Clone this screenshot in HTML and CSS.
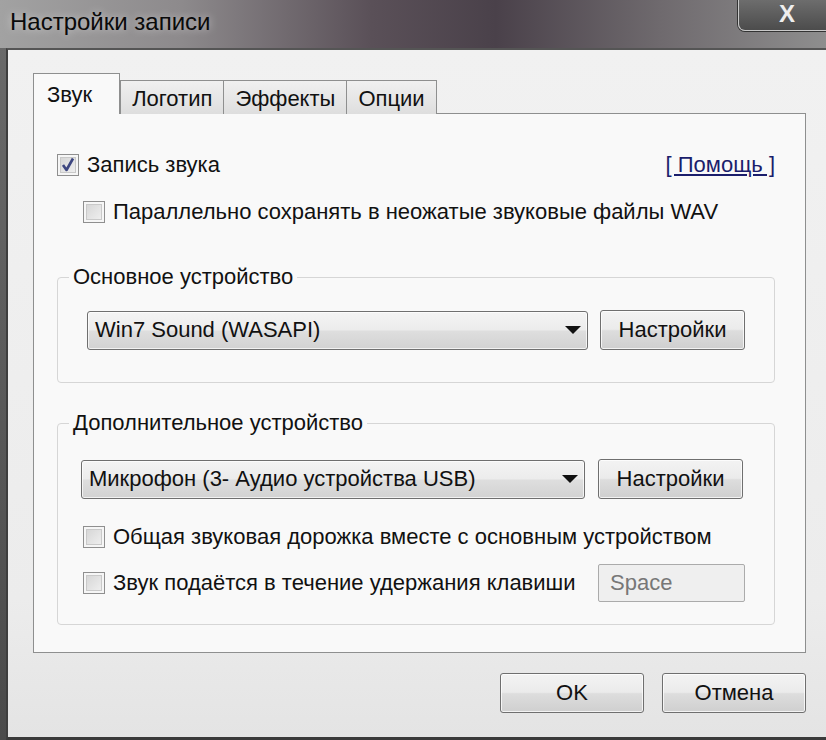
FILE: index.html
```html
<!DOCTYPE html>
<html lang="ru">
<head>
  <meta charset="UTF-8">
  <title>Настройки записи</title>
  <link rel="stylesheet" href="styles.css">
</head>
<body>
  <div class="window">
    <div class="titlebar">
      <span class="title">Настройки записи</span>
      <span class="close">X</span>
    </div>

    <div class="client">
      <div class="tabs">
        <span class="tab active">Звук</span>
        <span class="tab">Логотип</span>
        <span class="tab">Эффекты</span>
        <span class="tab">Опции</span>
      </div>

      <div class="panel">
        <div class="top-row">
          <label class="check">
            <span class="box">
              <svg width="20" height="20" viewBox="0 0 20 20"><path d="M5 10 L8.5 15 L15 3.5" fill="none" stroke="#3d4680" stroke-width="2.6" stroke-linejoin="round"/></svg>
            </span>
            Запись звука
          </label>
          <a class="help" href="#">[ Помощь ]</a>
        </div>
        <label class="check sub"><span class="box"></span>Параллельно сохранять в неожатые звуковые файлы WAV</label>

        <fieldset class="group main-dev">
          <legend>Основное устройство</legend>
          <div class="device-row">
            <div class="combo"><span>Win7 Sound (WASAPI)</span><span class="arrow"></span></div>
            <button class="btn">Настройки</button>
          </div>
        </fieldset>

        <fieldset class="group extra-dev">
          <legend>Дополнительное устройство</legend>
          <div class="device-row">
            <div class="combo"><span>Микрофон (3- Аудио устройства USB)</span><span class="arrow"></span></div>
            <button class="btn">Настройки</button>
          </div>
          <label class="check opt"><span class="box"></span>Общая звуковая дорожка вместе с основным устройством</label>
          <div class="key-row">
            <label class="check"><span class="box"></span>Звук подаётся в течение удержания клавиши</label>
            <span class="keybox">Space</span>
          </div>
        </fieldset>
      </div>

      <div class="footer">
        <button class="btn big">OK</button>
        <button class="btn big">Отмена</button>
      </div>
    </div>
  </div>
</body>
</html>
```

FILE: styles.css
```css
body {
  margin: 0;
  font-family: "Liberation Sans", Arial, sans-serif;
  font-size: 22px;
  color: #111;
}

.window {
  width: 826px;
  height: 740px;
  overflow: hidden;
  background: linear-gradient(180deg, #6b6b6b, #4a4a4a);
}

/* title bar */
.titlebar {
  height: 48px;
  display: flex;
  justify-content: space-between;
  align-items: flex-start;
  background: linear-gradient(90deg, #a2a2a2 0%, #8d8a8c 22%, #5a5058 45%, #4a414a 60%, #6f6a6e 80%, #8e8e8e 100%);
}

.title {
  padding-left: 10px;
  line-height: 44px;
  font-size: 24px;
  color: #0a0a0a;
  text-shadow: 0 0 8px rgba(255, 255, 255, 0.55);
}

.close {
  width: 98px;
  height: 31px;
  margin-right: -10px;
  box-sizing: border-box;
  border: 1px solid #c9c9c9;
  border-top: none;
  border-radius: 0 0 7px 7px;
  box-shadow: 0 0 0 1px #333;
  background: linear-gradient(180deg, #6d6d6d, #4c4c4c);
  color: #eee;
  font-weight: bold;
  font-size: 24px;
  line-height: 28px;
  text-align: center;
}

/* dialog body */
.client {
  height: 692px;
  margin-left: 6px;
  box-sizing: border-box;
  border-left: 2px solid #3e3e3e;
  border-top: 2px solid #555;
  border-bottom: 3px solid #3a3a3a;
  padding: 24px 20px 0 25px;
  background: linear-gradient(180deg, #f1f1f1 0%, #ececec 80%, #e4e4e4 100%);
}

.tabs {
  display: flex;
  align-items: flex-end;
  height: 40px;
  margin-bottom: -1px;
}

.tab {
  height: 34px;
  box-sizing: border-box;
  padding: 0 11px;
  margin-left: -1px;
  border: 1px solid #8e8f8f;
  border-bottom: none;
  line-height: 36px;
  background: linear-gradient(180deg, #f0f0f0, #dedede);
}

.tab.active {
  height: 41px;
  padding: 0 27px 0 13px;
  margin-left: 0;
  line-height: 42px;
  background: #f9f9f9;
  position: relative;
  z-index: 1;
}

.tab.active + .tab {
  margin-left: 0;
}

.panel {
  width: 773px;
  height: 540px;
  box-sizing: border-box;
  border: 1px solid #8e8f8f;
  background: #f9f9f9;
  padding: 40px 30px 0 23px;
}

/* checkboxes */
.check {
  display: flex;
  align-items: center;
  gap: 8px;
  white-space: nowrap;
}

.box {
  width: 22px;
  height: 22px;
  box-sizing: border-box;
  flex: none;
  display: flex;
  align-items: center;
  justify-content: center;
  border: 1px solid #8f8f8f;
  background: linear-gradient(135deg, #d2d2d2, #f3f3f3);
  box-shadow: inset 0 0 0 2px #f6f6f6, inset 0 0 0 3px #c9c9c9;
}

.top-row {
  display: flex;
  justify-content: space-between;
  align-items: center;
  height: 22px;
}

.help {
  color: #1b1e6c;
  text-decoration: underline;
}

.check.sub {
  margin: 25px 0 0 26px;
  height: 22px;
}

/* group boxes */
.group {
  margin: 42px 0 0;
  padding: 0;
  border: 1px solid #d6d6d6;
  border-radius: 4px;
}

.group legend {
  margin-left: 11px;
  padding: 0 4px;
  line-height: 24px;
}

.device-row {
  display: flex;
  align-items: center;
}

.main-dev .device-row {
  padding: 21px 29px 32px 29px;
  gap: 12px;
}

.extra-dev {
  margin-top: 28px;
  padding-bottom: 22px;
}

.extra-dev .device-row {
  padding: 24px 31px 0 23px;
  gap: 13px;
}

.combo {
  flex: 1;
  height: 39px;
  box-sizing: border-box;
  display: flex;
  align-items: center;
  justify-content: space-between;
  padding: 0 6px 0 7px;
  border: 1px solid #6f6f6f;
  border-radius: 3px;
  background: linear-gradient(180deg, #f4f4f4 0%, #ececec 48%, #dedede 52%, #d2d2d2 100%);
  box-shadow: inset 0 0 0 1px rgba(255, 255, 255, 0.7);
}

.arrow {
  width: 0;
  height: 0;
  border-left: 8px solid transparent;
  border-right: 8px solid transparent;
  border-top: 8px solid #111;
}

.btn {
  width: 145px;
  height: 40px;
  font: inherit;
  color: #111;
  border: 1px solid #6f6f6f;
  border-radius: 3px;
  background: linear-gradient(180deg, #f3f3f3 0%, #ebebeb 48%, #dddddd 52%, #cfcfcf 100%);
  box-shadow: inset 0 0 0 1px rgba(255, 255, 255, 0.75);
  padding: 0;
}

.check.opt {
  margin: 27px 0 0 25px;
  height: 22px;
}

.key-row {
  display: flex;
  align-items: center;
  margin: 16px 29px 0 25px;
}

.keybox {
  margin-left: auto;
  width: 147px;
  height: 38px;
  box-sizing: border-box;
  padding-left: 11px;
  line-height: 36px;
  border: 1px solid #ababab;
  border-radius: 2px;
  background: #efefef;
  color: #777;
}

/* bottom buttons */
.footer {
  display: flex;
  justify-content: flex-end;
  gap: 18px;
  margin-top: 20px;
}

.btn.big {
  width: 144px;
}
```
